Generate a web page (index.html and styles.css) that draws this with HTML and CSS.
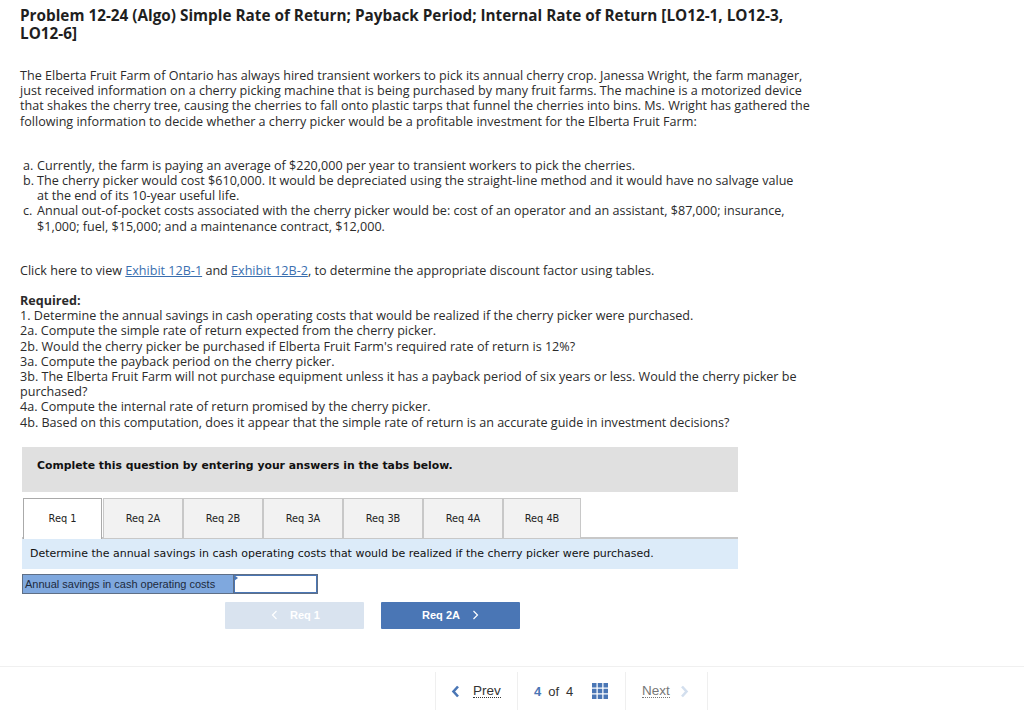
FILE: index.html
```html
<!DOCTYPE html>
<html lang="en">
<head>
<meta charset="utf-8">
<title>Problem 12-24</title>
<link rel="stylesheet" href="styles.css">
</head>
<body>
<main class="page">
  <h1 class="title">Problem 12-24 (Algo) Simple Rate of Return; Payback Period; Internal Rate of Return [LO12-1, LO12-3,<br>LO12-6]</h1>
  <p class="para intro">The Elberta Fruit Farm of Ontario has always hired transient workers to pick its annual cherry crop. Janessa Wright, the farm manager,<br>just received information on a cherry picking machine that is being purchased by many fruit farms. The machine is a motorized device<br>that shakes the cherry tree, causing the cherries to fall onto plastic tarps that funnel the cherries into bins. Ms. Wright has gathered the<br>following information to decide whether a cherry picker would be a profitable investment for the Elberta Fruit Farm:</p>
  <ol class="facts">
    <li><span class="mark">a.</span><span>Currently, the farm is paying an average of $220,000 per year to transient workers to pick the cherries.</span></li>
    <li><span class="mark">b.</span><span>The cherry picker would cost $610,000. It would be depreciated using the straight-line method and it would have no salvage value<br>at the end of its 10-year useful life.</span></li>
    <li><span class="mark">c.</span><span>Annual out-of-pocket costs associated with the cherry picker would be: cost of an operator and an assistant, $87,000; insurance,<br>$1,000; fuel, $15,000; and a maintenance contract, $12,000.</span></li>
  </ol>
  <p class="para click">Click here to view <a href="#">Exhibit 12B-1</a> and <a href="#">Exhibit 12B-2</a>, to determine the appropriate discount factor using tables.</p>
  <p class="para required"><strong>Required:</strong><br>1. Determine the annual savings in cash operating costs that would be realized if the cherry picker were purchased.<br>2a. Compute the simple rate of return expected from the cherry picker.<br>2b. Would the cherry picker be purchased if Elberta Fruit Farm's required rate of return is 12%?<br>3a. Compute the payback period on the cherry picker.<br>3b. The Elberta Fruit Farm will not purchase equipment unless it has a payback period of six years or less. Would the cherry picker be<br>purchased?<br>4a. Compute the internal rate of return promised by the cherry picker.<br>4b. Based on this computation, does it appear that the simple rate of return is an accurate guide in investment decisions?</p>

  <section class="work">
    <div class="banner">Complete this question by entering your answers in the tabs below.</div>
    <div class="tabs">
      <div class="tab active">Req 1</div>
      <div class="tab">Req 2A</div>
      <div class="tab">Req 2B</div>
      <div class="tab">Req 3A</div>
      <div class="tab">Req 3B</div>
      <div class="tab">Req 4A</div>
      <div class="tab">Req 4B</div>
    </div>
    <div class="prompt">Determine the annual savings in cash operating costs that would be realized if the cherry picker were purchased.</div>
    <div class="answer">
      <div class="answer-label">Annual savings in cash operating costs</div>
      <div class="answer-input"><span class="flag"></span></div>
    </div>
    <div class="buttons">
      <div class="btn btn-off">
        <svg class="chev" width="7" height="10" viewBox="0 0 7 10"><path d="M5.500 1 1.500 5l4 4" fill="none" stroke="#fff" stroke-width="1.200"/></svg>
        <span>Req 1</span>
      </div>
      <div class="btn btn-on">
        <span>Req 2A</span>
        <svg class="chev" width="7" height="10" viewBox="0 0 7 10"><path d="M1.500 1l4 4-4 4" fill="none" stroke="#fff" stroke-width="1.200"/></svg>
      </div>
    </div>
  </section>
</main>
<footer class="footer">
  <nav class="pager">
    <div class="cell cell-prev">
      <svg width="9" height="13" viewBox="0 0 9 13"><path d="M7 1.500 2.500 6.500 7 11.500" fill="none" stroke="#4a76b5" stroke-width="2.600"/></svg>
      <span class="dotted">Prev</span>
    </div>
    <div class="cell cell-count">
      <span class="cur">4</span><span class="of">of</span><span class="tot">4</span>
      <svg class="grid" width="16" height="16" viewBox="0 0 16 16" fill="#4a76b5"><path d="M0 0h4.500v4.500H0zM5.750 0h4.500v4.500h-4.500zM11.500 0H16v4.500h-4.500zM0 5.750h4.500v4.500H0zM5.750 5.750h4.500v4.500h-4.500zM11.500 5.750H16v4.500h-4.500zM0 11.500h4.500V16H0zM5.750 11.500h4.500V16h-4.500zM11.500 11.500H16V16h-4.500z"/></svg>
    </div>
    <div class="cell cell-next">
      <span class="dotted muted">Next</span>
      <svg width="9" height="13" viewBox="0 0 9 13"><path d="M2 1.500 6.500 6.500 2 11.500" fill="none" stroke="#d3dfee" stroke-width="2.600"/></svg>
    </div>
  </nav>
</footer>
</body>
</html>
```

FILE: styles.css
```css
* { box-sizing: border-box; }
html, body { margin: 0; padding: 0; background: #fff; }
body { width: 1024px; height: 716px; overflow: hidden; font-family: "Open Sans", "Lato", sans-serif; color: #2b2b2b; }
.page { padding: 6px 0 0 20px; }
.title { margin: 0; font-size: 15.3px; line-height: 18px; font-weight: 700; color: #1f1f1f; }
.para { margin: 0; font-size: 12.58px; line-height: 15.2px; }
.intro { margin-top: 26px; }
.facts { list-style: none; margin: 29px 0 0; padding: 0; font-size: 12.58px; line-height: 15.2px; }
.facts li { display: flex; }
.mark { width: 17px; padding-left: 3px; flex: none; }
.click { margin-top: 29px; }
.click a { color: #3a6fb0; text-decoration: underline; }
.required { margin-top: 15px; }
.required strong { font-weight: 700; }
.work { margin-left: 2px; width: 716px; }
.banner { margin-top: 17px; height: 45px; padding: 12px 15px 0; background: #e0e0e0; font-family: "DejaVu Sans", sans-serif; font-weight: 700; font-size: 10.85px; line-height: 14px; color: #111; }
.tabs { display: flex; margin-top: 6px; padding-left: 1px; height: 41px; border-bottom: 2px solid #c8c8c8; }
.tab { width: 80px; height: 40px; background: #f2f2f2; border: 1px solid #c8c8c8; border-bottom: 0; display: flex; align-items: center; justify-content: center; font-family: "DejaVu Sans", sans-serif; font-size: 9.8px; color: #222; }
.tab:last-child { width: 78px; }
.tab.active { width: 79px; margin-right: 1px; background: #fff; border-color: #aaa; height: 41px; position: relative; z-index: 1; }
.prompt { height: 30px; background: #dcebf9; padding: 0 8px; display: flex; align-items: center; font-family: "DejaVu Sans", sans-serif; font-size: 10.98px; color: #111; }
.answer { display: flex; width: 296px; height: 20px; margin-top: 5px; border: 1px solid #5f6f86; }
.answer-label { width: 211px; background: #7fa8de; border-right: 1px solid #5f6f86; padding-left: 2px; font-family: "Liberation Sans", sans-serif; font-size: 11px; line-height: 18px; color: #1d2a3d; }
.answer-input { flex: 1; position: relative; background: #fff; border: 1px solid #4a76b5; }
.flag { position: absolute; left: -1px; top: -1px; width: 0; height: 0; border-left: 4px solid #4a76b5; border-top: 3px solid transparent; border-bottom: 3px solid transparent; }
.buttons { display: flex; gap: 17px; margin: 8px 0 0 203px; }
.btn { width: 139px; height: 27px; border-radius: 1px; display: flex; align-items: center; justify-content: center; gap: 12px; font-family: "Liberation Sans", sans-serif; font-size: 11px; font-weight: 700; color: #fff; }
.btn-off { background: #d9e3ef; padding-left: 2px; }
.btn-on { background: #4a76b5; }
.footer { margin-top: 37px; border-top: 1px solid #f0f0f0; height: 50px; padding-left: 435px; }
.pager { display: flex; height: 38px; margin-top: 5px; border-left: 1px solid #efefef; font-family: "Liberation Sans", sans-serif; font-size: 13.5px; width: 273px; border-right: 1px solid #efefef; }
.cell { display: flex; align-items: center; height: 100%; padding-top: 1px; }
.cell-prev { width: 82px; padding-left: 15px; gap: 13px; border-right: 1px solid #efefef; }
.cell-count { width: 108px; padding-left: 16px; border-right: 1px solid #efefef; color: #333; font-size: 13px; }
.cell-next { flex: 1; padding-left: 16px; gap: 10px; }
.dotted { border-bottom: 1px dotted #333; line-height: 12px; color: #333; }
.dotted.muted { color: #777; border-color: #777; }
.cur { color: #4a76b5; font-weight: 700; }
.of { margin: 0 7px; }
.grid { margin-left: 19px; }
```
